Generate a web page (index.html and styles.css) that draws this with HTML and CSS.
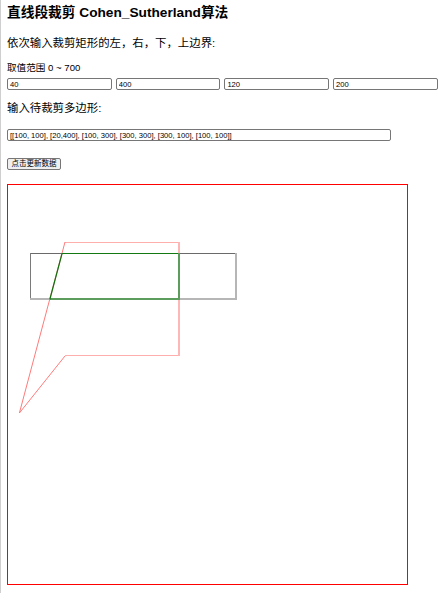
FILE: index.html
```html
<!DOCTYPE html>
<html lang="zh">
<head>
<meta charset="utf-8">
<title>直线段裁剪 Cohen_Sutherland算法</title>
<link rel="stylesheet" href="styles.css">
</head>
<body>
<h2 class="title">直线段裁剪 Cohen_Sutherland算法</h2>
<p class="label">依次输入裁剪矩形的左，右，下，上边界:</p>
<div class="range">取值范围 0 ~ 700</div>
<div class="bounds">
  <input class="field" type="text" value="40">
  <input class="field" type="text" value="400">
  <input class="field" type="text" value="120">
  <input class="field" type="text" value="200">
</div>
<p class="label label-poly">输入待裁剪多边形:</p>
<input class="field poly" type="text" value="[[100, 100], [20,400], [100, 300], [300, 300], [300, 100], [100, 100]]">
<div class="actions"><button class="btn" type="button">点击更新数据</button></div>
<canvas id="cv" class="board" width="399" height="399"></canvas>
<script src="script.js"></script>
</body>
</html>
```

FILE: styles.css
```css
html {
  margin: 0;
  padding: 0 0 0 1px;
  border-left: 1px solid #cfcfcf;
  min-height: 100%;
  box-sizing: border-box;
  background: #fff;
}
body {
  margin: 0;
  padding: 5px 0 0 5px;
  font-family: "Liberation Sans", "Noto Sans CJK SC", sans-serif;
  color: #000;
}
.title {
  margin: 0;
  font-size: 13.7px;
  line-height: 16px;
  font-weight: bold;
}
.label {
  margin: 14px 0 0 0;
  font-size: 11.4px;
  line-height: 16px;
}
.label-poly {
  margin-top: 10px;
}
.range {
  margin-top: 11px;
  font-size: 9.6px;
  line-height: 12px;
}
.bounds {
  display: flex;
  gap: 4px;
  margin-top: 4px;
}
.field {
  box-sizing: border-box;
  height: 12px;
  margin: 0;
  padding: 0 2px;
  border: 1px solid #767676;
  border-radius: 2px;
  font-family: "Liberation Sans", "Noto Sans CJK SC", sans-serif;
  font-size: 7.6px;
  color: #000;
  background: #fff;
}
.bounds .field {
  width: 104.7px;
}
.poly {
  display: block;
  width: 384px;
  margin-top: 13px;
}
.actions {
  margin-top: 17px;
  display: flex;
}
.btn {
  box-sizing: border-box;
  height: 12px;
  width: 54px;
  margin: 0;
  padding: 0 3px;
  border: 1px solid #767676;
  border-radius: 2px;
  background: #efefef;
  font-family: "Liberation Sans", "Noto Sans CJK SC", sans-serif;
  font-size: 7.5px;
  line-height: 10px;
  color: #000;
}
.board {
  display: block;
  margin-top: 14px;
  width: 399px;
  height: 399px;
  border: 1px solid red;
}
```

FILE: script.js
```js
(function () {
  var c = document.getElementById('cv');
  var ctx = c.getContext('2d');
  var s = 399 / 700;

  function rect(x, y, w, h, color) {
    ctx.fillStyle = color;
    ctx.fillRect(x, y, w, h);
  }
  function seg(a, b, color) {
    ctx.strokeStyle = color;
    ctx.lineWidth = 1;
    ctx.beginPath();
    ctx.moveTo(a[0] * s, a[1] * s);
    ctx.lineTo(b[0] * s, b[1] * s);
    ctx.stroke();
  }

  /* polygon to clip (light red) */
  rect(57, 57, 115, 1, '#ffaeae');
  rect(57, 170, 115, 1, '#ffaeae');
  rect(170, 57, 2, 114, '#ffb6b6');
  seg([100, 100], [20, 400], '#ff7a7a');
  seg([20, 400], [100, 300], '#ff7a7a');

  /* clipping window (grey) */
  rect(22, 68, 207, 1, '#6a6a6a');
  rect(22, 68, 1, 47, '#7a7a7a');
  rect(22, 113, 207, 2, '#b6b6b6');
  rect(227, 68, 2, 47, '#b6b6b6');

  /* clipped result (green) */
  var x1 = 100 - 80 * (20 / 300);
  var x2 = 100 - 80 * (100 / 300);
  rect(54, 68, 118, 1, '#137a13');
  rect(42, 113, 130, 2, '#5c9c5c');
  rect(170, 68, 2, 47, '#5c9c5c');
  ctx.lineWidth = 1.2;
  ctx.strokeStyle = '#0e720e';
  ctx.beginPath();
  ctx.moveTo(x1 * s, 120 * s + 0.5);
  ctx.lineTo(x2 * s, 200 * s + 0.5);
  ctx.stroke();
})();
```
